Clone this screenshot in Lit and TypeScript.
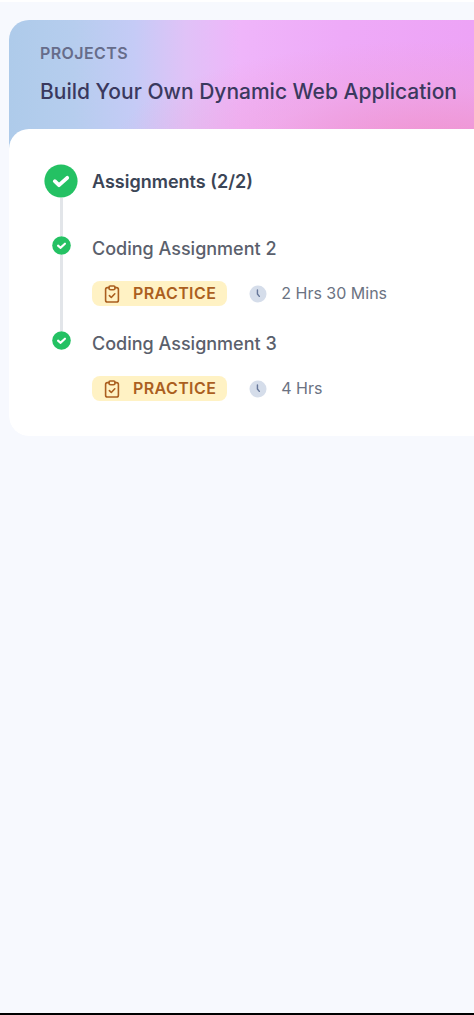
import { LitElement, html, css } from "lit";
import { customElement, property } from "lit/decorators.js";

interface Task {
  name: string;
  kind: string;
  duration: string;
}

const TASKS: Task[] = [
  { name: "Coding Assignment 2", kind: "PRACTICE", duration: "2 Hrs 30 Mins" },
  { name: "Coding Assignment 3", kind: "PRACTICE", duration: "4 Hrs" },
];

@customElement("done-mark")
class DoneMark extends LitElement {
  static styles = css`
    :host {
      display: block;
      flex: none;
    }
    .mark {
      display: block;
      width: 100%;
      height: auto;
    }
  `;

  render() {
    return html`<svg class="mark" viewBox="0 0 34 34" role="img" aria-label="Completed">
      <circle cx="17" cy="17" r="16.6" fill="#24c163" />
      <path d="M10.8 17.2l4.2 4 8.2-7.4" fill="none" stroke="#fff" stroke-width="3.8" stroke-linecap="round" stroke-linejoin="round" />
    </svg>`;
  }
}

@customElement("task-item")
class TaskItem extends LitElement {
  @property({ attribute: false }) task!: Task;

  static styles = css`
    :host {
      display: block;
    }
    .name {
      margin: 0;
      font-size: 18px;
      line-height: 26px;
      font-weight: 500;
      color: #5a606c;
    }
    .meta {
      display: flex;
      flex-wrap: wrap;
      align-items: center;
      gap: 22px;
      padding: 19px 0 25px;
    }
    .chip {
      display: flex;
      align-items: center;
      gap: 12px;
      padding: 0 11px;
      border-radius: 8px;
      background: #fff2c4;
      color: #ab5f1f;
      font-size: 16px;
      line-height: 25px;
      font-weight: 600;
      letter-spacing: 0.025em;
    }
    .time {
      display: flex;
      align-items: center;
      gap: 14px;
      font-size: 16px;
      line-height: 25px;
      font-weight: 400;
      color: #6b7282;
    }
    .icon {
      display: block;
      flex: none;
    }
  `;

  render() {
    return html`
      <h3 class="name">${this.task.name}</h3>
      <div class="meta">
        <span class="chip">
          <svg class="icon" width="18" height="18" viewBox="0 0 18 18" fill="none" stroke="currentColor" stroke-width="1.6" stroke-linecap="round" stroke-linejoin="round" aria-hidden="true">
            <path d="M6 2.6H4.4a1.8 1.8 0 0 0-1.8 1.8v10.8A1.8 1.8 0 0 0 4.4 17h9.2a1.8 1.8 0 0 0 1.8-1.8V4.4a1.8 1.8 0 0 0-1.8-1.8H12" />
            <path d="M7.2 1h3.6A1.2 1.2 0 0 1 12 2.2v1a1.6 1.6 0 0 1-1.6 1.6H7.6A1.6 1.6 0 0 1 6 3.2v-1A1.2 1.2 0 0 1 7.2 1z" />
            <path d="M6.4 10.6l1.9 1.9 3.5-3.7" />
          </svg>
          ${this.task.kind}
        </span>
        <span class="time">
          <svg class="icon" width="18" height="18" viewBox="0 0 19 19" aria-hidden="true">
            <circle cx="9.5" cy="9.5" r="9" fill="#d5ddea" />
            <path d="M8.9 5.3v4.2l2 2.5" fill="none" stroke="#667799" stroke-width="1.5" stroke-linecap="round" stroke-linejoin="round" />
          </svg>
          ${this.task.duration}
        </span>
      </div>
    `;
  }
}

@customElement("app-root")
class AppRoot extends LitElement {
  static styles = css`
    :host {
      display: flex;
      flex-direction: column;
      box-sizing: border-box;
      min-height: 100vh;
      padding: 18px 0 0 9px;
      border-top: 2px solid #fff;
      border-bottom: 2px solid #000;
      background: #f7f9fe;
      font-family: Inter, "Liberation Sans", sans-serif;
    }
    .card {
      border-radius: 20px 0 0 20px;
      overflow: hidden;
      background-image:
        radial-gradient(ellipse 70% 110px at 92% 130px, rgba(240, 145, 200, 0.9), rgba(240, 160, 215, 0.45) 55%, rgba(240, 170, 225, 0) 100%),
        linear-gradient(90deg, #aecbea 0%, #b6cdee 14%, #c5cbf6 27%, #e0c2f7 38%, #efb5fa 50%, #eeaaf8 72%, #eda3f6 100%);
      background-repeat: no-repeat;
      background-size: 100% 150px;
    }
    .banner {
      padding: 20px 12px 22px 31px;
    }
    .eyebrow {
      margin: 0;
      font-size: 16px;
      line-height: 26px;
      font-weight: 600;
      letter-spacing: 0.025em;
      color: #666c8a;
    }
    .title {
      margin: 0;
      padding-top: 11px;
      font-size: 21px;
      line-height: 30px;
      font-weight: 450;
      color: #3a395e;
    }
    .body {
      padding: 35px 20px 10px 35px;
      border-radius: 20px 0 0 20px;
      background: #fff;
    }
    .row {
      display: flex;
      gap: 14px;
    }
    .rail {
      display: flex;
      flex: none;
      flex-direction: column;
      align-items: center;
      width: 34px;
    }
    .line {
      flex: 1;
      width: 3px;
      background: #e2e5e9;
    }
    .large {
      width: 34px;
    }
    .small {
      width: 19px;
    }
    .heading {
      margin: 0;
      padding-bottom: 36px;
      font-size: 18px;
      line-height: 36px;
      font-weight: 600;
      color: #3b4556;
    }
    .list {
      margin: 0;
      padding: 0;
      list-style: none;
    }
  `;

  render() {
    return html`
      <main class="card">
        <header class="banner">
          <p class="eyebrow">PROJECTS</p>
          <h1 class="title">Build Your Own Dynamic Web Application</h1>
        </header>
        <section class="body">
          <div class="row">
            <div class="rail">
              <done-mark class="large"></done-mark>
              <span class="line"></span>
            </div>
            <h2 class="heading">Assignments (${TASKS.length}/${TASKS.length})</h2>
          </div>
          <ol class="list">
            ${TASKS.map(
              (task, i) => html`<li class="row">
                <div class="rail">
                  <done-mark class="small"></done-mark>
                  ${i < TASKS.length - 1 ? html`<span class="line"></span>` : null}
                </div>
                <task-item .task=${task}></task-item>
              </li>`
            )}
          </ol>
        </section>
      </main>
    `;
  }
}
